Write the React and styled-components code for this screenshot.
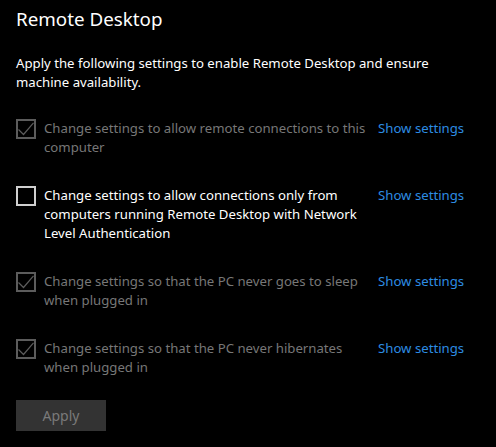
import React from "react";
import styled, { createGlobalStyle } from "styled-components";

const Global = createGlobalStyle`
  html, body { margin: 0; padding: 0; background: #000; }
  body { font-family: "Noto Sans", "Open Sans", sans-serif; }
`;

const Page = styled.div`
  width: 496px;
  height: 447px;
  box-sizing: border-box;
  padding: 5px 16px 0 16px;
  background: #000;
  color: #fff;
`;

const Title = styled.h1`
  margin: 0;
  font-size: 18.8px;
  font-weight: 400;
  line-height: 28px;
  color: #fff;
`;

const Description = styled.p`
  margin: 21px 0 0 0;
  font-size: 13.2px;
  line-height: 19px;
  color: #fff;
`;

const List = styled.div`
  display: flex;
  flex-direction: column;
  gap: 29px;
  margin-top: 27px;
`;

const Row = styled.div`
  display: grid;
  grid-template-columns: 20px 326px auto;
  column-gap: 8px;
  align-items: start;
`;

const Box = styled.span`
  width: 20px;
  height: 20px;
  box-sizing: border-box;
  border: 2px solid ${(p) => (p.$disabled ? "#5c5c5c" : "#cfcfcf")};
  display: flex;
  align-items: center;
  justify-content: center;
`;

const Label = styled.span`
  font-size: 13.2px;
  line-height: 19px;
  color: ${(p) => (p.$disabled ? "#777" : "#fff")};
`;

const Link = styled.a`
  font-size: 13.2px;
  line-height: 19px;
  color: #2d8ce3;
  text-decoration: none;
  white-space: nowrap;
  cursor: pointer;
`;

const Button = styled.button`
  margin-top: 23px;
  width: 90px;
  height: 31px;
  border: none;
  background: #333;
  color: #7a7a7a;
  font-family: inherit;
  font-size: 14px;
  padding: 0;
`;

function Check({ checked, disabled }) {
  return (
    <Box $disabled={disabled}>
      {checked && (
        <svg width="16" height="16" viewBox="0 0 16 16" style={{ display: "block" }}>
          <path d="M0.5 8.5 L5.5 13.5 L15.5 1.8" fill="none" stroke={disabled ? "#5c5c5c" : "#cfcfcf"} strokeWidth="1.2" />
        </svg>
      )}
    </Box>
  );
}

const items = [
  { text: "Change settings to allow remote connections to this computer", checked: true, disabled: true },
  { text: "Change settings to allow connections only from computers running Remote Desktop with Network Level Authentication", checked: false, disabled: false },
  { text: "Change settings so that the PC never goes to sleep when plugged in", checked: true, disabled: true },
  { text: "Change settings so that the PC never hibernates when plugged in", checked: true, disabled: true },
];

export default function App() {
  return (
    <Page>
      <Global />
      <Title>Remote Desktop</Title>
      <Description>
        Apply the following settings to enable Remote Desktop and ensure machine availability.
      </Description>
      <List>
        {items.map((it, i) => (
          <Row key={i}>
            <Check checked={it.checked} disabled={it.disabled} />
            <Label $disabled={it.disabled}>{it.text}</Label>
            <Link>Show settings</Link>
          </Row>
        ))}
      </List>
      <Button disabled>Apply</Button>
    </Page>
  );
}
